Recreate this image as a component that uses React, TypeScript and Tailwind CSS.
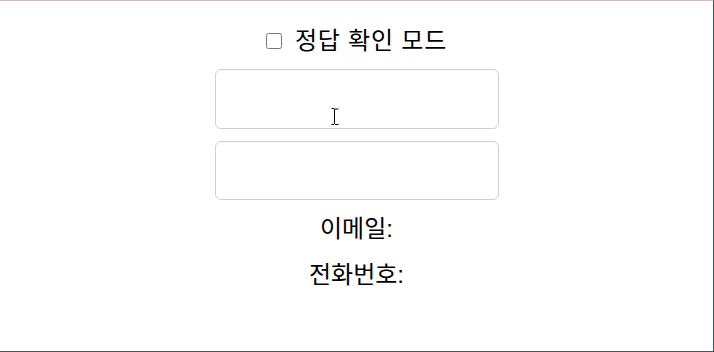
import React, { useState } from 'react';

const font = { fontFamily: '"Liberation Sans", "Noto Sans CJK KR", sans-serif' };

export default function App() {
  const [checked, setChecked] = useState(false);

  return (
    <div
      className="relative w-full h-[352px] bg-white border-t border-t-[#cbbdb7] border-r border-r-[#2f5f60] border-b border-b-[#2f5f60] flex flex-col items-center text-black"
      style={font}
    >
      <label className="mt-[24px] flex items-center text-[24px] leading-[32px]">
        <input
          type="checkbox"
          checked={checked}
          onChange={(e) => setChecked(e.target.checked)}
          className="w-4 h-4 mr-[13px] accent-gray-500"
        />
        <span className="tracking-[0.8px]">정답 확인 모드</span>
      </label>

      <input
        type="text"
        className="mt-[12px] w-[284px] h-[60px] rounded-[6px] border border-[#d0d0d0] px-3 outline-none"
      />
      <input
        type="text"
        className="mt-[12px] w-[284px] h-[59px] rounded-[6px] border border-[#d0d0d0] px-3 outline-none"
      />

      <div className="mt-[13px] text-[24px] leading-[32px]">이메일:</div>
      <div className="mt-[14px] text-[24px] leading-[32px]">전화번호:</div>

      {/* mouse cursor */}
      <svg className="absolute left-[331px] top-[107px]" width="8" height="17" viewBox="0 0 8 17">
        <path d="M0.5 0.5h2.5v0.5M4 1h3.5M3.5 1v15M0.5 16.5h2.5M4 16.5h3.5" stroke="#000" strokeWidth="1" fill="none" />
      </svg>
    </div>
  );
}
